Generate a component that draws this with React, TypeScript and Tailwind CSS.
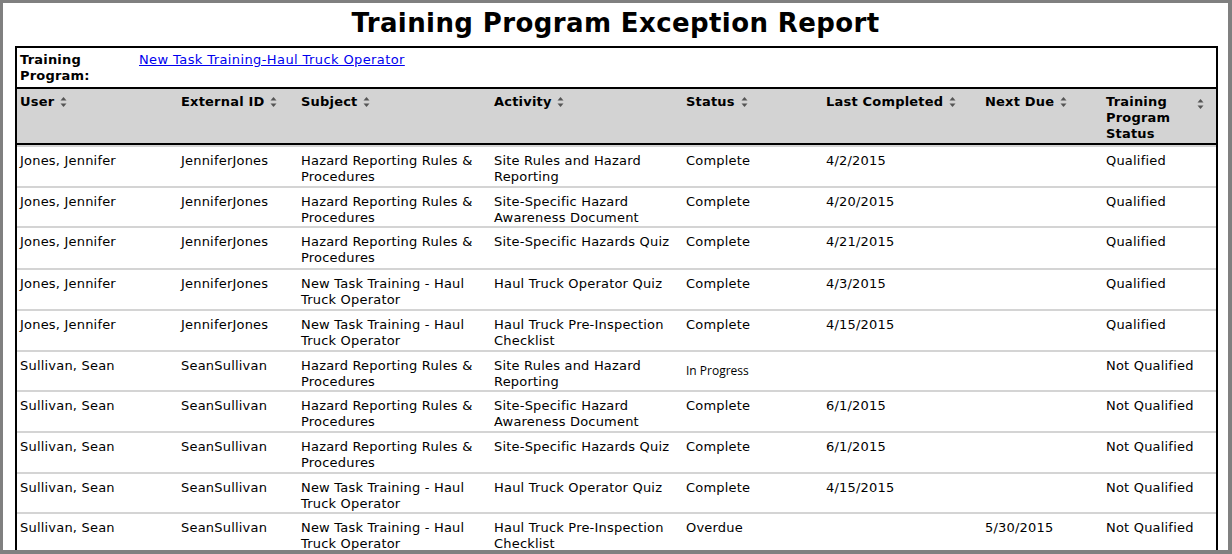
const rows = [
  ["Jones, Jennifer", "JenniferJones", "Hazard Reporting Rules & Procedures", "Site Rules and Hazard Reporting", "Complete", "4/2/2015", "", "Qualified"],
  ["Jones, Jennifer", "JenniferJones", "Hazard Reporting Rules & Procedures", "Site-Specific Hazard Awareness Document", "Complete", "4/20/2015", "", "Qualified"],
  ["Jones, Jennifer", "JenniferJones", "Hazard Reporting Rules & Procedures", "Site-Specific Hazards Quiz", "Complete", "4/21/2015", "", "Qualified"],
  ["Jones, Jennifer", "JenniferJones", "New Task Training - Haul Truck Operator", "Haul Truck Operator Quiz", "Complete", "4/3/2015", "", "Qualified"],
  ["Jones, Jennifer", "JenniferJones", "New Task Training - Haul Truck Operator", "Haul Truck Pre-Inspection Checklist", "Complete", "4/15/2015", "", "Qualified"],
  ["Sullivan, Sean", "SeanSullivan", "Hazard Reporting Rules & Procedures", "Site Rules and Hazard Reporting", "In Progress", "", "", "Not Qualified"],
  ["Sullivan, Sean", "SeanSullivan", "Hazard Reporting Rules & Procedures", "Site-Specific Hazard Awareness Document", "Complete", "6/1/2015", "", "Not Qualified"],
  ["Sullivan, Sean", "SeanSullivan", "Hazard Reporting Rules & Procedures", "Site-Specific Hazards Quiz", "Complete", "6/1/2015", "", "Not Qualified"],
  ["Sullivan, Sean", "SeanSullivan", "New Task Training - Haul Truck Operator", "Haul Truck Operator Quiz", "Complete", "4/15/2015", "", "Not Qualified"],
  ["Sullivan, Sean", "SeanSullivan", "New Task Training - Haul Truck Operator", "Haul Truck Pre-Inspection Checklist", "Overdue", "", "5/30/2015", "Not Qualified"],
]

// row heights in the original report aren't all the same
const rowMinH = ["min-h-[39px]", "min-h-[38px]", "min-h-[40px]", "min-h-[39px]", "min-h-[39px]", "min-h-[38px]", "min-h-[39px]", "min-h-[39px]", "min-h-[38px]", "min-h-[39px]"]

const headers = ["User", "External ID", "Subject", "Activity", "Status", "Last Completed", "Next Due"]

const grid = "grid grid-cols-[161px_120px_193px_192px_140px_159px_121px_113px]"

const SortIcon = () => (
  <svg width="7" height="12" viewBox="0 0 7 12" className="inline-block shrink-0 align-[-2px]">
    <path d="M3.5 1 L6.5 4.5 L0.5 4.5 Z" fill="#555" />
    <path d="M0.5 7.5 L6.5 7.5 L3.5 11 Z" fill="#555" />
  </svg>
)

export default function App() {
  return (
    <div
      className="h-[554px] w-[1232px] overflow-hidden border-t-[3px] border-r-[4px] border-b-[4px] border-l-[3px] border-[#808080] bg-white text-[13px] leading-[16px] tracking-[0.2px] text-black"
      style={{ fontFamily: '"DejaVu Sans", Verdana, sans-serif' }}
    >
      <h1 className="h-[43px] pt-[4px] text-center text-[26px] font-bold leading-[32px] tracking-[0.4px]">
        Training Program Exception Report
      </h1>

      <div className="ml-[12px] w-[1203px] border-2 border-black">
        <div className="flex pt-[4px] pb-[3px]">
          <div className="w-[122px] pl-[3px] font-bold">
            Training
            <br />
            Program:
          </div>
          <a href="#" className="tracking-[0.4px] text-[#0000ee] underline">
            New Task Training-Haul Truck Operator
          </a>
        </div>

        <div className={`${grid} border-t-2 border-b-2 border-black bg-[#d3d3d3] font-bold`}>
          {headers.map((h) => (
            <div key={h} className="h-[54px] px-[3px] pt-[5px]">
              {h} <span className="ml-[1px]"><SortIcon /></span>
            </div>
          ))}
          <div className="flex justify-between pt-[5px] pr-[12px] pl-[3px]">
            <span className="w-[80px]">Training Program Status</span>
            <span className="pt-[2px]">
              <SortIcon />
            </span>
          </div>
        </div>
        <div className="h-[2px] bg-[#d4d4d4]" />

        {rows.map((r, i) => (
          <div key={i} className={`${grid} border-b-2 border-[#d4d4d4]`}>
            {r.map((c, j) => (
              <div key={j} className={`${rowMinH[i]} px-[3px] pt-[6px] pb-0`}>
                {c === "In Progress" ? (
                  <span
                    className="mt-[5px] block text-[12px] leading-[16px] tracking-normal"
                    style={{ fontFamily: '"Open Sans", sans-serif' }}
                  >
                    {c}
                  </span>
                ) : (
                  c
                )}
              </div>
            ))}
          </div>
        ))}
      </div>
    </div>
  )
}
